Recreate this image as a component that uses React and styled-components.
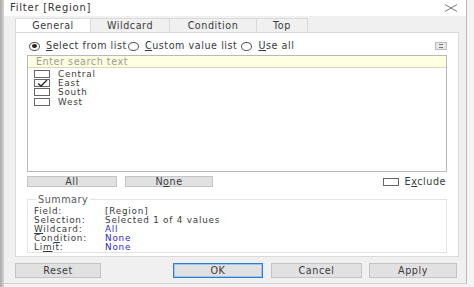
import React from "react";
import styled, { createGlobalStyle } from "styled-components";

const GlobalStyle = createGlobalStyle`
  html, body {
    margin: 0;
    padding: 0;
    background: #f4f4f4;
  }
  body {
    font-family: "DejaVu Sans", Verdana, sans-serif;
    font-size: 9.6px;
    line-height: 10px;
    letter-spacing: 0.55px;
    color: #3a3a3a;
  }
`;

const Screen = styled.div`
  width: 474px;
  height: 287px;
  display: flex;
  overflow: hidden;
  background: #f4f4f4;
`;

const Edge = styled.div`
  width: 4px;
  background: linear-gradient(to right, #a9a9a9, #d4d4d4);
`;

const Dialog = styled.div`
  width: 462px;
  height: 283px;
  display: flex;
  flex-direction: column;
  background: #f0f0f0;
  border-right: 1px solid #b8b8b8;
  border-bottom: 1px solid #d0d0d0;
`;

const TitleBar = styled.div`
  height: 16px;
  flex-shrink: 0;
  background: #ffffff;
  display: flex;
  align-items: center;
  justify-content: space-between;
  padding: 0 8px 0 6px;
  font-size: 10px;
  letter-spacing: 0.75px;
  color: #333;
`;

const Body = styled.div`
  flex: 1;
  display: flex;
  flex-direction: column;
  padding: 2px 7px 0 11px;
`;

const Tabs = styled.div`
  display: flex;
  height: 14px;
`;

const Tab = styled.div`
  width: ${(p) => p.w}px;
  display: flex;
  align-items: center;
  justify-content: center;
  background: ${(p) => (p.active ? "#ffffff" : "#f0f0f0")};
  border: 1px solid #dadada;
  border-bottom: none;
  margin-left: -1px;
  &:first-child {
    margin-left: 0;
  }
`;

const Panel = styled.div`
  box-sizing: border-box;
  height: 225px;
  background: #ffffff;
  border: 1px solid #dadada;
  display: flex;
  flex-direction: column;
  padding: 7px 11px 0 11px;
  overflow: hidden;
`;

const RadioRow = styled.div`
  display: flex;
  align-items: center;
  height: 12px;
  padding-left: 2px;
`;

const RadioItem = styled.label`
  display: flex;
  align-items: center;
  gap: 6px;
  margin-right: ${(p) => p.mr || 0}px;
`;

const Radio = styled.span`
  width: 11px;
  height: 9px;
  border-radius: 50%;
  border: 1px solid #555;
  display: flex;
  align-items: center;
  justify-content: center;
  box-sizing: border-box;
  &::after {
    content: "";
    display: ${(p) => (p.checked ? "block" : "none")};
    width: 5px;
    height: 4px;
    border-radius: 50%;
    background: #222;
  }
`;

const MiniButton = styled.div`
  margin-left: auto;
  width: 10px;
  height: 6px;
  border: 1px solid #bbb;
  background: #e8e8e8;
  display: flex;
  align-items: center;
  justify-content: center;
  &::after {
    content: "";
    width: 4px;
    height: 2px;
    border-top: 1px solid #777;
    border-bottom: 1px solid #777;
  }
`;

const ListBox = styled.div`
  margin-top: 3px;
  height: 117px;
  flex-shrink: 0;
  box-sizing: border-box;
  border: 1px solid #b9b9b9;
  display: flex;
  flex-direction: column;
`;

const Search = styled.div`
  height: 11px;
  background: #ffffe1;
  border-bottom: 1px solid #d8d8c0;
  padding-left: 8px;
  display: flex;
  align-items: center;
  color: #9a9a9a;
`;

const Items = styled.div`
  padding: 1px 0 0 6px;
  display: flex;
  flex-direction: column;
`;

const Item = styled.div`
  height: 9.4px;
  line-height: 8px;
  font-size: 8.8px;
  letter-spacing: 0.8px;
  display: flex;
  align-items: center;
  gap: 8px;
`;

const Box = styled.span`
  width: 16px;
  height: 8px;
  box-sizing: border-box;
  border: 1px solid #666;
  background: #fff;
  position: relative;
  flex-shrink: 0;
`;

const Tick = styled.svg`
  position: absolute;
  left: 2px;
  top: -1px;
`;

const ActionRow = styled.div`
  margin-top: 4px;
  height: 11px;
  flex-shrink: 0;
  display: flex;
  align-items: center;
  gap: 8px;
`;

const Button = styled.div`
  width: ${(p) => p.w}px;
  height: ${(p) => p.h || 11}px;
  flex-shrink: 0;
  box-sizing: border-box;
  display: flex;
  align-items: center;
  justify-content: center;
  background: #e1e1e1;
  border: 1px solid ${(p) => (p.focus ? "#2a7fd4" : "#c4c4c4")};
  box-shadow: ${(p) => (p.focus ? "inset 0 0 0 1px #9cc6ef" : "none")};
`;

const Exclude = styled.label`
  margin-left: auto;
  display: flex;
  align-items: center;
  gap: 6px;
  padding-right: 1px;
`;

const Summary = styled.fieldset`
  box-sizing: border-box;
  margin: 8px 0 0 0;
  padding: 2px 0 0 6px;
  height: 58px;
  min-width: 0;
  border: 1px solid #e3e3e3;
  display: flex;
  flex-direction: column;
  legend {
    padding: 0 2px;
    margin-left: 2px;
    color: #555;
    line-height: 9px;
  }
`;

const SumRow = styled.div`
  display: grid;
  grid-template-columns: 71px 1fr;
  height: 9px;
  line-height: 8px;
  font-size: 8.8px;
  letter-spacing: 0.8px;
  align-items: center;
`;

const Value = styled.span`
  color: ${(p) => (p.blue ? "#2b2bc4" : "#3a3a3a")};
`;

const Footer = styled.div`
  margin-top: 6px;
  display: flex;
  align-items: center;
`;

const Spacer = styled.div`
  width: ${(p) => p.w}px;
`;

const U = styled.span`
  text-decoration: underline;
`;

const CheckBox = ({ checked }) => (
  <Box>
    {checked && (
      <Tick width="11" height="8" viewBox="0 0 11 8">
        <path d="M1 4.5 L4 7 L10 1" fill="none" stroke="#222" strokeWidth="1.3" />
      </Tick>
    )}
  </Box>
);

const regions = [
  { name: "Central", checked: false },
  { name: "East", checked: true },
  { name: "South", checked: false },
  { name: "West", checked: false },
];

const summary = [
  { label: "Field:", value: "[Region]" },
  { label: "Selection:", value: "Selected 1 of 4 values" },
  { label: <><U>W</U>ildcard:</>, value: "All", blue: true },
  { label: <>Con<U>d</U>ition:</>, value: "None", blue: true },
  { label: <>Li<U>m</U>it:</>, value: "None", blue: true },
];

export default function App() {
  return (
    <>
      <GlobalStyle />
      <Screen>
        <Edge />
        <Dialog>
          <TitleBar>
            <span>Filter [Region]</span>
            <svg width="14" height="8" viewBox="0 0 14 8">
              <path d="M1 0.5 L13 7.5 M13 0.5 L1 7.5" stroke="#777" strokeWidth="1" />
            </svg>
          </TitleBar>
          <Body>
            <Tabs>
              <Tab w={74} active>General</Tab>
              <Tab w={78}>Wildcard</Tab>
              <Tab w={86}>Condition</Tab>
              <Tab w={50}>Top</Tab>
            </Tabs>
            <Panel>
              <RadioRow>
                <RadioItem mr={1}>
                  <Radio checked />
                  <span><U>S</U>elect from list</span>
                </RadioItem>
                <RadioItem mr={4}>
                  <Radio />
                  <span><U>C</U>ustom value list</span>
                </RadioItem>
                <RadioItem>
                  <Radio />
                  <span><U>U</U>se all</span>
                </RadioItem>
                <MiniButton />
              </RadioRow>
              <ListBox>
                <Search>Enter search text</Search>
                <Items>
                  {regions.map((r) => (
                    <Item key={r.name}>
                      <CheckBox checked={r.checked} />
                      <span>{r.name}</span>
                    </Item>
                  ))}
                </Items>
              </ListBox>
              <ActionRow>
                <Button w={90}>All</Button>
                <Button w={88}>N<U>o</U>ne</Button>
                <Exclude>
                  <CheckBox />
                  <span>E<U>x</U>clude</span>
                </Exclude>
              </ActionRow>
              <Summary>
                <legend>Summary</legend>
                {summary.map((s, i) => (
                  <SumRow key={i}>
                    <span>{s.label}</span>
                    <Value blue={s.blue}>{s.value}</Value>
                  </SumRow>
                ))}
              </Summary>
            </Panel>
            <Footer>
              <Button w={86} h={15}>Reset</Button>
              <Spacer w={72} />
              <Button w={90} h={15} focus>OK</Button>
              <Spacer w={8} />
              <Button w={91} h={15}>Cancel</Button>
              <Spacer w={7} />
              <Button w={88} h={15}>Apply</Button>
            </Footer>
          </Body>
        </Dialog>
      </Screen>
    </>
  );
}
